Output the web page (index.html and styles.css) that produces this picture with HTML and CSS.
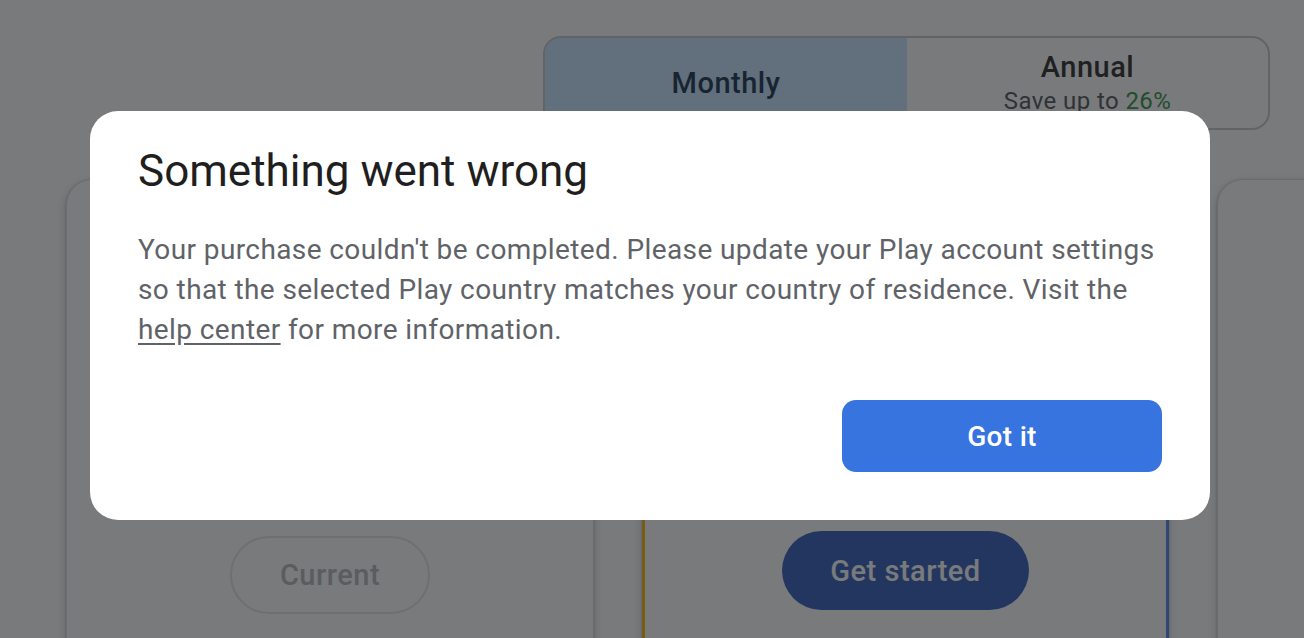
FILE: index.html
```html
<!DOCTYPE html>
<html lang="en">
<head>
<meta charset="utf-8">
<title>Plans</title>
<link rel="stylesheet" href="styles.css">
</head>
<body>
<div class="page">
  <div class="top">
    <div class="toggle">
      <div class="opt opt-sel">Monthly</div>
      <div class="opt">
        <div class="opt-title">Annual</div>
        <div class="save">Save up to <span class="pct">26%</span></div>
      </div>
    </div>
  </div>
  <div class="cards">
    <div class="card card-basic">
      <button class="btn-current">Current</button>
    </div>
    <div class="card card-premium">
      <button class="btn-start">Get started</button>
    </div>
    <div class="card card-other"></div>
  </div>
</div>
<div class="scrim"></div>
<div class="dialog" role="dialog" aria-labelledby="dlg-title">
  <h2 class="dlg-title" id="dlg-title">Something went wrong</h2>
  <p class="dlg-body">Your purchase couldn't be completed. Please update your Play account settings so that the selected Play country matches your country of residence. Visit the <a class="dlg-link" href="#">help center</a> for more information.</p>
  <div class="dlg-actions">
    <button class="btn-got">Got it</button>
  </div>
</div>
</body>
</html>
```
FILE: styles.css
```css
* { box-sizing: border-box; }
html, body {
  margin: 0;
  padding: 0;
  background: #ffffff;
  overflow: hidden;
  height: 638px;
  font-family: Roboto, "Noto Sans", Arial, sans-serif;
}
.page {
  width: 1304px;
  height: 638px;
  overflow: hidden;
}
.top {
  display: flex;
  padding: 36px 0 0 543px;
}
.toggle {
  width: 727px;
  height: 94px;
  border: 2px solid #c4c7c5;
  border-radius: 18px;
  overflow: hidden;
  display: grid;
  grid-template-columns: 362px 1fr;
}
.opt {
  display: flex;
  flex-direction: column;
  align-items: center;
  justify-content: center;
  color: #1f1f1f;
  font-size: 29px;
  font-weight: 500;
  letter-spacing: 0.5px;
}
.opt-sel {
  background: #c2e7ff;
  color: #0e2a44;
}
.opt-title {
  line-height: 36px;
}
.save {
  font-size: 24px;
  font-weight: 400;
  letter-spacing: 0.4px;
  color: #4a4d4f;
  line-height: 32px;
}
.pct { color: #1e8e3e; }
.cards {
  display: flex;
  gap: 48px;
  margin-top: 49px;
  padding-left: 66px;
}
.card {
  flex: 0 0 528px;
  height: 600px;
  background: #ffffff;
  border: 1px solid #dadce0;
  border-radius: 26px;
  box-shadow: 0 1px 3px rgba(0,0,0,0.25), 0 4px 10px 2px rgba(0,0,0,0.12);
}
.card-basic {
  padding-top: 356px;
}
.card-premium {
  flex-basis: 527px;
  border: 3px solid transparent;
  background:
    linear-gradient(#ffffff, #ffffff) padding-box,
    linear-gradient(90deg, #f9b400 0%, #f28b82 40%, #7aa7ff 70%, #4a80f0 100%) border-box;
  padding-top: 349px;
}
.btn-current {
  display: block;
  margin: 0 auto;
  width: 200px;
  height: 78px;
  border: 2px solid #e3e3e3;
  border-radius: 39px;
  background: transparent;
  color: #b1b3b6;
  font-family: inherit;
  font-size: 29px;
  font-weight: 500;
  letter-spacing: 0.5px;
}
.btn-start {
  display: block;
  margin: 0 auto;
  width: 247px;
  height: 79px;
  border: none;
  border-radius: 40px;
  background: #2a56b8;
  color: #ffffff;
  font-family: inherit;
  font-size: 29px;
  font-weight: 500;
  letter-spacing: 0.5px;
}
.scrim {
  position: fixed;
  inset: 0;
  background: rgba(32, 33, 36, 0.6);
}
.dialog {
  position: fixed;
  left: 90px;
  top: 111px;
  width: 1120px;
  height: 409px;
  background: #ffffff;
  border-radius: 28px;
  padding: 34px 48px 48px 48px;
  display: flex;
  flex-direction: column;
}
.dlg-title {
  margin: 0;
  font-size: 44px;
  line-height: 52px;
  font-weight: 400;
  color: #1f1f1f;
}
.dlg-body {
  margin: 33px 0 0 0;
  font-size: 28px;
  line-height: 40px;
  letter-spacing: 0.4px;
  color: #5f6368;
}
.dlg-link {
  color: #5f6368;
  text-decoration: underline;
  text-underline-offset: 4px;
}
.dlg-actions {
  margin-top: auto;
  display: flex;
  justify-content: flex-end;
}
.btn-got {
  width: 320px;
  height: 72px;
  border: none;
  border-radius: 14px;
  background: #3874e0;
  color: #ffffff;
  font-family: inherit;
  font-size: 28px;
  font-weight: 500;
  letter-spacing: 0.3px;
}
```
